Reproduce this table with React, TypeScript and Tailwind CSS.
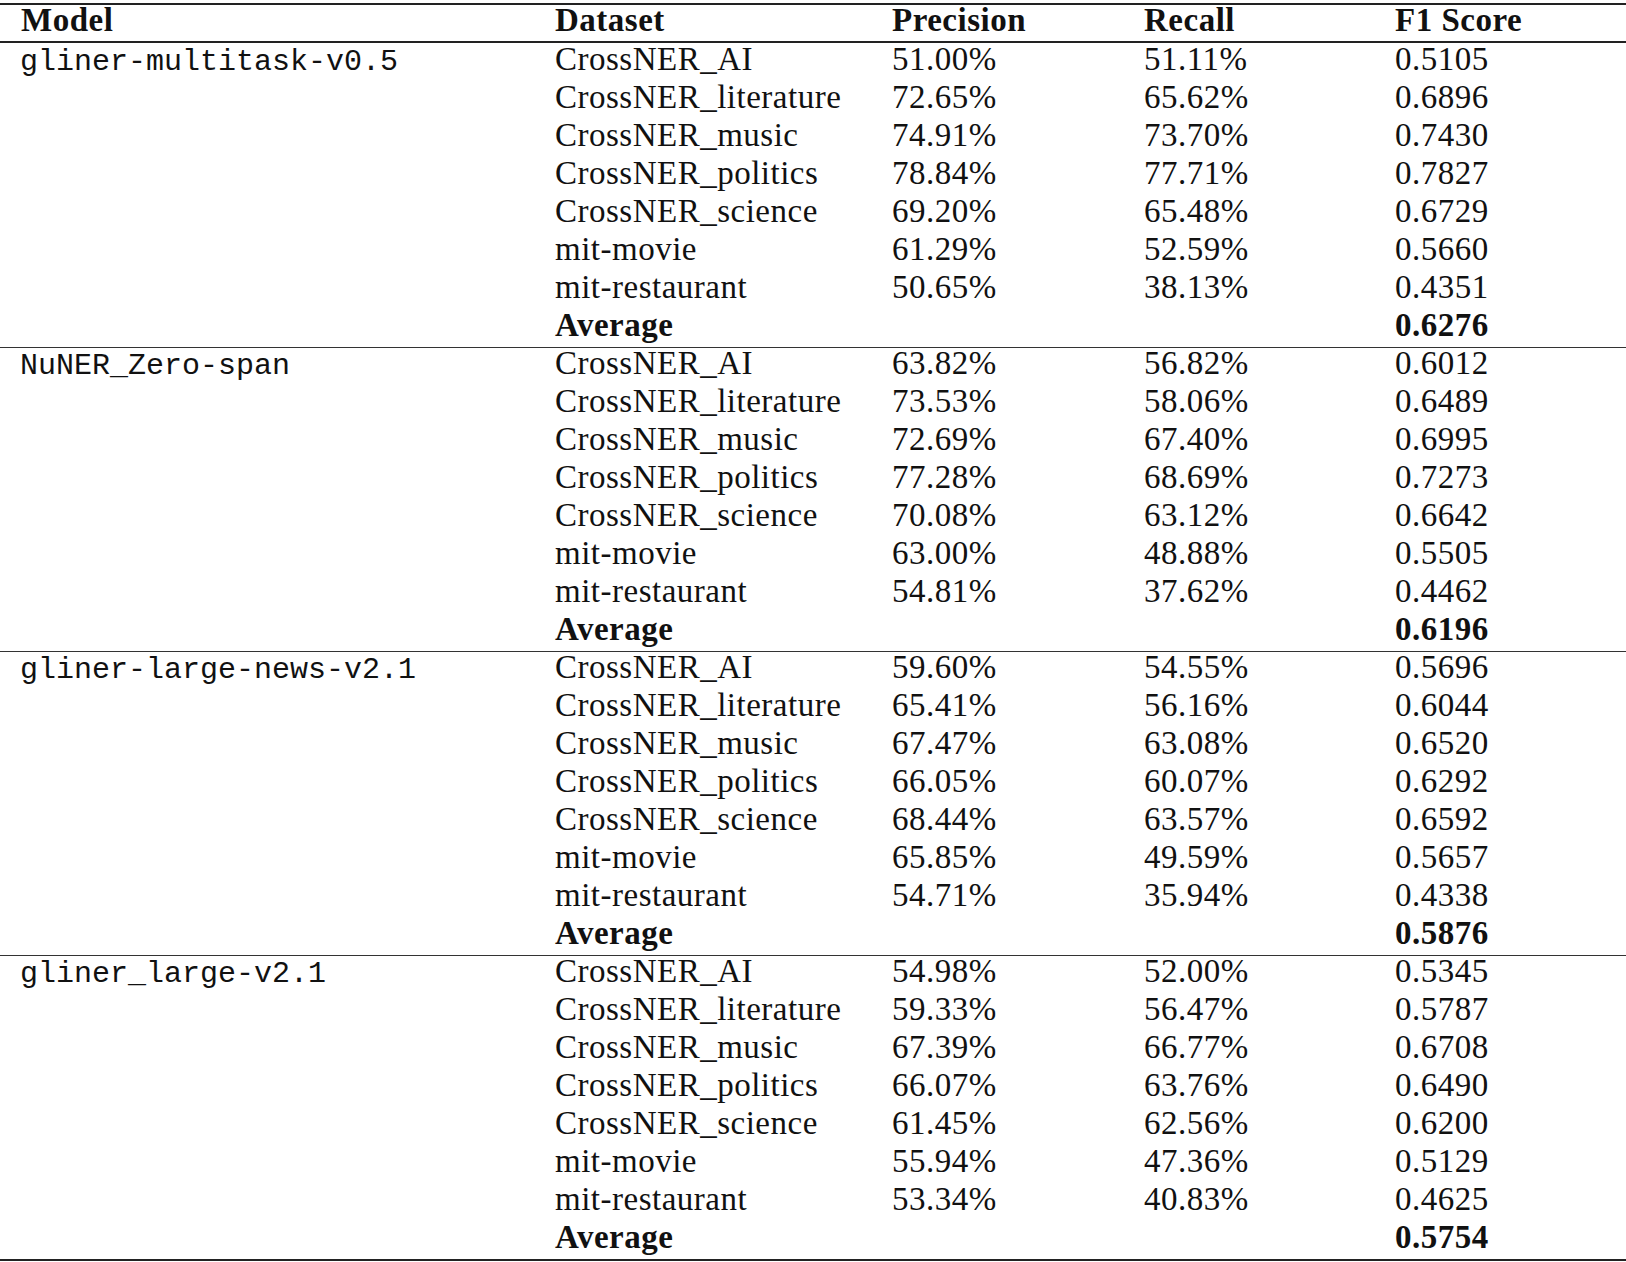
type Row = { dataset: string; precision: string; recall: string; f1: string };
type Group = { model: string; rows: Row[]; average: string };

const datasets = [
  "CrossNER_AI",
  "CrossNER_literature",
  "CrossNER_music",
  "CrossNER_politics",
  "CrossNER_science",
  "mit-movie",
  "mit-restaurant",
];

function build(model: string, values: [string, string, string][], average: string): Group {
  return {
    model,
    average,
    rows: values.map(([precision, recall, f1], i) => ({ dataset: datasets[i], precision, recall, f1 })),
  };
}

const groups: Group[] = [
  build(
    "gliner-multitask-v0.5",
    [
      ["51.00%", "51.11%", "0.5105"],
      ["72.65%", "65.62%", "0.6896"],
      ["74.91%", "73.70%", "0.7430"],
      ["78.84%", "77.71%", "0.7827"],
      ["69.20%", "65.48%", "0.6729"],
      ["61.29%", "52.59%", "0.5660"],
      ["50.65%", "38.13%", "0.4351"],
    ],
    "0.6276",
  ),
  build(
    "NuNER_Zero-span",
    [
      ["63.82%", "56.82%", "0.6012"],
      ["73.53%", "58.06%", "0.6489"],
      ["72.69%", "67.40%", "0.6995"],
      ["77.28%", "68.69%", "0.7273"],
      ["70.08%", "63.12%", "0.6642"],
      ["63.00%", "48.88%", "0.5505"],
      ["54.81%", "37.62%", "0.4462"],
    ],
    "0.6196",
  ),
  build(
    "gliner-large-news-v2.1",
    [
      ["59.60%", "54.55%", "0.5696"],
      ["65.41%", "56.16%", "0.6044"],
      ["67.47%", "63.08%", "0.6520"],
      ["66.05%", "60.07%", "0.6292"],
      ["68.44%", "63.57%", "0.6592"],
      ["65.85%", "49.59%", "0.5657"],
      ["54.71%", "35.94%", "0.4338"],
    ],
    "0.5876",
  ),
  build(
    "gliner_large-v2.1",
    [
      ["54.98%", "52.00%", "0.5345"],
      ["59.33%", "56.47%", "0.5787"],
      ["67.39%", "66.77%", "0.6708"],
      ["66.07%", "63.76%", "0.6490"],
      ["61.45%", "62.56%", "0.6200"],
      ["55.94%", "47.36%", "0.5129"],
      ["53.34%", "40.83%", "0.4625"],
    ],
    "0.5754",
  ),
];

const serif = "font-['Liberation_Serif','Times_New_Roman',serif] text-[33px] tracking-[0.5px]";
const mono = "font-['Liberation_Mono','Courier_New',monospace] text-[30px] tracking-normal";
const cols = "grid grid-cols-[555px_337px_252px_251px_1fr] items-baseline";

export default function App() {
  return (
    <div className={`min-h-[1262px] w-[1626px] bg-white pt-[3px] text-[#111] ${serif}`}>
      <div className="h-[2px] bg-[#222]" />
      <div className={`${cols} h-[36px] font-bold leading-[30px]`}>
        <div className="pl-[21px]">Model</div>
        <div>Dataset</div>
        <div>Precision</div>
        <div>Recall</div>
        <div>F1 Score</div>
      </div>
      <div className="h-[2px] bg-[#222]" />
      {groups.map((group, gi) => (
        <div key={group.model} className={gi > 0 ? "border-t border-[#333]" : ""}>
          {group.rows.map((row, i) => (
            <div key={row.dataset} className={`${cols} h-[38px] leading-[32px] ${i === 0 && gi > 0 ? "-mt-px" : ""}`}>
              <div className={`pl-[20px] ${mono}`}>{i === 0 ? group.model : ""}</div>
              <div>{row.dataset}</div>
              <div>{row.precision}</div>
              <div>{row.recall}</div>
              <div>{row.f1}</div>
            </div>
          ))}
          <div className={`${cols} h-[38px] leading-[32px] font-bold`}>
            <div />
            <div>Average</div>
            <div />
            <div />
            <div>{group.average}</div>
          </div>
        </div>
      ))}
      <div className="h-[2px] bg-[#222]" />
    </div>
  );
}
